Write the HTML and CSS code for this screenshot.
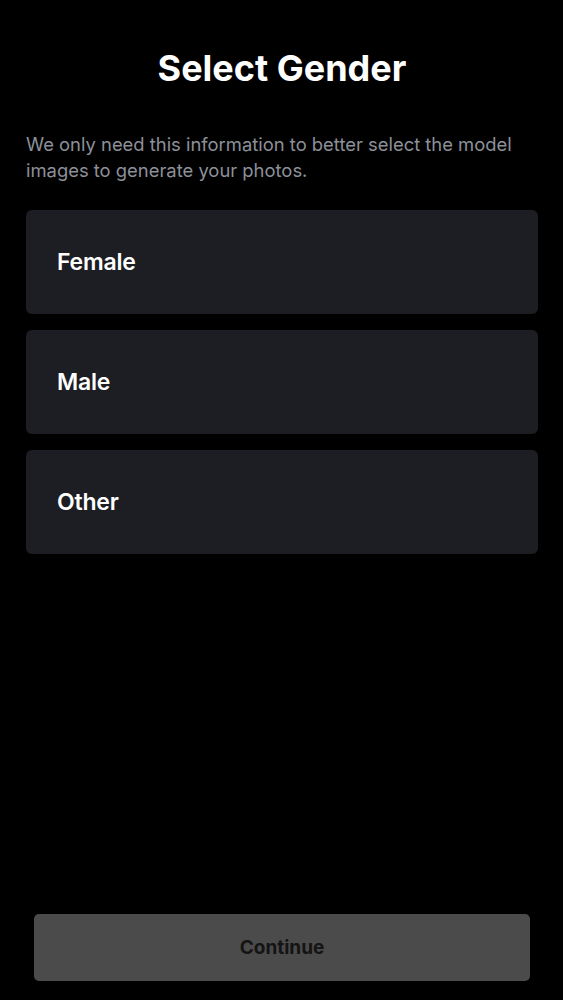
FILE: index.html
```html
<!DOCTYPE html>
<html lang="en">
<head>
<meta charset="utf-8">
<title>Select Gender</title>
<link rel="stylesheet" href="styles.css">
</head>
<body>
<main class="screen">
  <h1 class="title">Select Gender</h1>
  <p class="subtitle">We only need this information to better select the model images to generate your photos.</p>
  <div class="options">
    <button class="option">Female</button>
    <button class="option">Male</button>
    <button class="option">Other</button>
  </div>
  <div class="footer">
    <button class="continue">Continue</button>
  </div>
</main>
</body>
</html>
```

FILE: styles.css
```css
html, body {
  margin: 0;
  padding: 0;
  background: #000;
}
body {
  font-family: Inter, "Noto Sans", sans-serif;
  color: #fff;
}
.screen {
  height: 1000px;
  box-sizing: border-box;
  padding: 45px 25px 19px 26px;
  display: flex;
  flex-direction: column;
}
.title {
  margin: 0;
  text-align: center;
  font-size: 36px;
  font-weight: 700;
  line-height: 46px;
  letter-spacing: 0;
}
.subtitle {
  margin: 40px 0 0;
  font-size: 18.4px;
  line-height: 26px;
  color: #8c9099;
}
.options {
  margin-top: 27px;
  display: flex;
  flex-direction: column;
  gap: 16px;
}
.option {
  height: 104px;
  border: none;
  border-radius: 6px;
  background: #1d1e23;
  color: #fff;
  text-align: left;
  padding: 0 0 0 31px;
  font-family: inherit;
  font-size: 23px;
  font-weight: 600;
  letter-spacing: -0.2px;
}
.footer {
  margin-top: auto;
  padding: 0 8px;
}
.continue {
  width: 100%;
  height: 67px;
  border: none;
  border-radius: 5px;
  background: #4b4b4b;
  color: #141414;
  font-family: inherit;
  font-size: 19px;
  font-weight: 700;
}
```
